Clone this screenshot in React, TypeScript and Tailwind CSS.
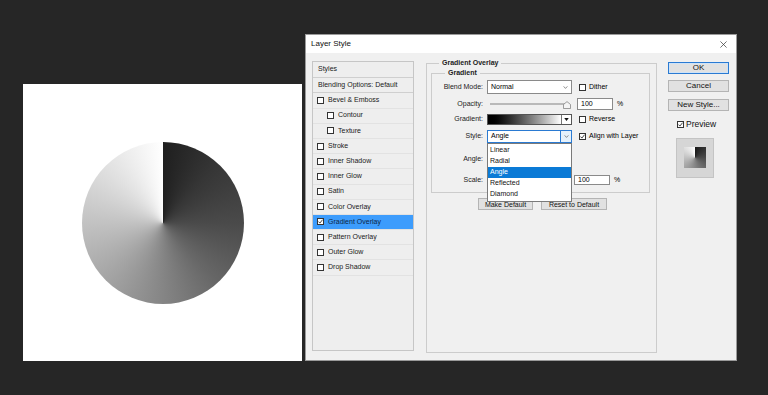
import React from "react";

const effects = [
  { label: "Bevel & Emboss" },
  { label: "Contour", indent: true },
  { label: "Texture", indent: true },
  { label: "Stroke" },
  { label: "Inner Shadow" },
  { label: "Inner Glow" },
  { label: "Satin" },
  { label: "Color Overlay" },
  { label: "Gradient Overlay", checked: true, active: true },
  { label: "Pattern Overlay" },
  { label: "Outer Glow" },
  { label: "Drop Shadow" },
];

const styleOptions = ["Linear", "Radial", "Angle", "Reflected", "Diamond"];

function Box({ checked = false }: { checked?: boolean }) {
  return (
    <span className="flex h-[7px] w-[7px] shrink-0 items-center justify-center border border-[#333] bg-white">
      {checked && (
        <svg viewBox="0 0 6 6" className="h-[5px] w-[5px]">
          <path d="M0.6 3.1 L2.3 4.9 L5.5 0.8" fill="none" stroke="#222" strokeWidth="1" />
        </svg>
      )}
    </span>
  );
}

function Chevron() {
  return (
    <svg viewBox="0 0 6 4" className="h-[3px] w-[5px]">
      <path d="M0.5 0.5 L3 3.2 L5.5 0.5" fill="none" stroke="#444" strokeWidth="0.8" />
    </svg>
  );
}

function Label({ children }: { children: React.ReactNode }) {
  return <span className="w-[52px] shrink-0 pr-[1px] text-right text-[7px] text-[#222]">{children}</span>;
}

function Btn({ children, primary = false, className = "" }: { children: React.ReactNode; primary?: boolean; className?: string }) {
  return (
    <div
      className={`flex items-center justify-center bg-[#e1e1e1] text-[8px] leading-none text-[#111] ${
        primary ? "border border-[#2a7ad2] shadow-[inset_0_0_0_1px_#cfe3f7]" : "border border-[#b4b4b4]"
      } ${className}`}
    >
      {children}
    </div>
  );
}

export default function App() {
  return (
    <div className="flex h-[395px] w-[768px] items-start overflow-hidden bg-[#262626] font-['Liberation_Sans',Arial,sans-serif]">
      {/* canvas */}
      <div className="ml-[23px] mt-[84px] flex h-[277px] w-[279px] items-center justify-center bg-white">
        <div className="h-[162px] w-[162px] rounded-full bg-[image:conic-gradient(#1f1f1f,#363636_12%,#4a4a4a_25%,#666666_38%,#858585_50%,#a3a3a3_62%,#c2c2c2_75%,#e2e2e2_88%,#ffffff)]" />
      </div>

      {/* dialog */}
      <div className="ml-[3px] mt-[34px] flex h-[327px] w-[432px] flex-col border border-[#9a9a9a] bg-[#f0f0f0]">
        <div className="flex h-[18px] shrink-0 items-center justify-between bg-white pl-[5px] pr-[9px]">
          <span className="text-[8px] text-[#111]">Layer Style</span>
          <svg viewBox="0 0 8 8" className="h-[7px] w-[7px]">
            <path d="M0.5 0.5 L7.5 7.5 M7.5 0.5 L0.5 7.5" stroke="#333" strokeWidth="0.8" />
          </svg>
        </div>

        <div className="flex flex-1 items-start pl-[6px]">
          {/* styles list */}
          <div className="mt-[8px] flex h-[290px] w-[102px] flex-col border border-[#c6c6c6] bg-[#eeeeee] text-[7px] text-[#1a1a1a]">
            <div className="flex h-[16px] items-center border-b border-[#cfcfcf] pl-[5px]">Styles</div>
            <div className="flex h-[15.4px] items-center border-b border-[#cfcfcf] pl-[5px]">Blending Options: Default</div>
            {effects.map((e) => (
              <div
                key={e.label}
                className={`flex h-[15.2px] items-center gap-[4px] border-b border-[#e2e2e2] ${e.indent ? "pl-[14px]" : "pl-[4px]"} ${
                  e.active ? "bg-[#3d9cfc] text-[#0e2745]" : ""
                }`}
              >
                <Box checked={e.checked} />
                <span>{e.label}</span>
              </div>
            ))}
          </div>

          {/* gradient overlay group */}
          <fieldset className="ml-[12px] mt-[5px] h-[295px] w-[231px] border border-[#cccccc]">
            <legend className="ml-[12px] px-[3px] text-[7px] font-bold leading-[10px] text-[#222]">Gradient Overlay</legend>
            <fieldset className="ml-[4px] mr-[6px] border border-[#cccccc] pb-[7px]">
              <legend className="ml-[13px] px-[3px] text-[7px] font-bold leading-[10px] text-[#222]">Gradient</legend>

              <div className="mt-[2px] flex h-[14px] items-center">
                <Label>Blend Mode:</Label>
                <div className="ml-[3px] flex h-full w-[85px] items-center justify-between border border-[#8a8a8a] bg-white pl-[3px] pr-[3px] text-[7px]">
                  <span>Normal</span>
                  <Chevron />
                </div>
                <div className="ml-[7px] flex items-center gap-[3px] text-[7px]">
                  <Box />
                  <span>Dither</span>
                </div>
              </div>

              <div className="mt-[4px] flex h-[12px] items-center">
                <Label>Opacity:</Label>
                <div className="relative ml-[3px] flex h-full w-[85px] items-center pl-[3px] pr-[4px]">
                  <div className="h-[2px] w-full border-y border-[#b9b9b9] bg-[#e4e4e4]" />
                  <svg viewBox="0 0 8 8" className="absolute right-[1px] top-[3px] h-[8px] w-[8px]">
                    <path d="M0.5 7.5 L0.5 3.5 L4 0.6 L7.5 3.5 L7.5 7.5 Z" fill="#f4f4f4" stroke="#777" strokeWidth="0.7" />
                  </svg>
                </div>
                <div className="ml-[5px] flex h-full w-[36px] items-center border border-[#8a8a8a] bg-white pl-[3px] text-[7px]">100</div>
                <span className="ml-[4px] text-[7px]">%</span>
              </div>

              <div className="mt-[4px] flex h-[11px] items-center">
                <Label>Gradient:</Label>
                <div className="ml-[3px] flex h-full w-[85px] border border-[#555]">
                  <div className="h-full flex-1 bg-linear-to-r from-black to-white" />
                  <div className="flex h-full w-[10px] items-center justify-center border-l border-[#777] bg-white">
                    <svg viewBox="0 0 6 4" className="h-[3px] w-[5px]">
                      <path d="M0 0 L6 0 L3 4 Z" fill="#111" />
                    </svg>
                  </div>
                </div>
                <div className="ml-[7px] flex items-center gap-[3px] text-[7px]">
                  <Box />
                  <span>Reverse</span>
                </div>
              </div>

              <div className="mt-[5px] flex h-[13px] items-center">
                <Label>Style:</Label>
                <div className="relative z-10 ml-[3px] h-full w-[85px]">
                  <div className="flex h-full w-full items-center justify-between border border-[#2a7ad2] bg-white pl-[3px] text-[7px]">
                    <span>Angle</span>
                    <div className="flex h-full w-[11px] items-center justify-center border-l border-[#2a7ad2] bg-[#e5f1fb]">
                      <Chevron />
                    </div>
                  </div>
                  <div className="absolute left-0 top-full flex w-[85px] flex-col border border-[#7a7a7a] bg-white py-[1px] text-[7px]">
                    {styleOptions.map((o) => (
                      <div
                        key={o}
                        className={`flex h-[11px] items-center pl-[2px] ${o === "Angle" ? "bg-[#0a7ad6] text-white" : "text-[#111]"}`}
                      >
                        {o}
                      </div>
                    ))}
                  </div>
                </div>
                <div className="ml-[7px] flex items-center gap-[3px] text-[7px]">
                  <Box checked />
                  <span>Align with Layer</span>
                </div>
              </div>

              <div className="mt-[4px] flex h-[24px] items-center">
                <Label>Angle:</Label>
              </div>

              <div className="mt-[4px] flex h-[10px] items-center">
                <Label>Scale:</Label>
                <div className="ml-[90px] flex h-full w-[36px] items-center border border-[#8a8a8a] bg-white pl-[3px] text-[7px]">100</div>
                <span className="ml-[4px] text-[7px]">%</span>
              </div>
            </fieldset>

            <div className="mt-[5px] flex justify-center gap-[8px] pl-[2px]">
              <Btn className="h-[12px] w-[55px] !text-[7px]">Make Default</Btn>
              <Btn className="h-[12px] w-[66px] !text-[7px]">Reset to Default</Btn>
            </div>
          </fieldset>

          {/* buttons column */}
          <div className="ml-[11px] mt-[9px] flex w-[61px] flex-col">
            <Btn primary className="h-[12px]">OK</Btn>
            <Btn className="mt-[6px] h-[12px]">Cancel</Btn>
            <Btn className="mt-[7px] h-[12px]">New Style...</Btn>
            <div className="mt-[7px] flex items-center gap-[2px] pl-[9px] text-[8.5px] text-[#111]">
              <Box checked />
              <span>Preview</span>
            </div>
            <div className="ml-[8px] mt-[7px] flex h-[40px] w-[38px] items-center justify-center border border-[#c4c4c4] bg-[#d6d6d6]">
              <div className="h-[21px] w-[22px] bg-[image:conic-gradient(#1a1a1a,#4a4a4a_25%,#858585_50%,#c2c2c2_75%,#ffffff)]" />
            </div>
          </div>
        </div>
      </div>
    </div>
  );
}
